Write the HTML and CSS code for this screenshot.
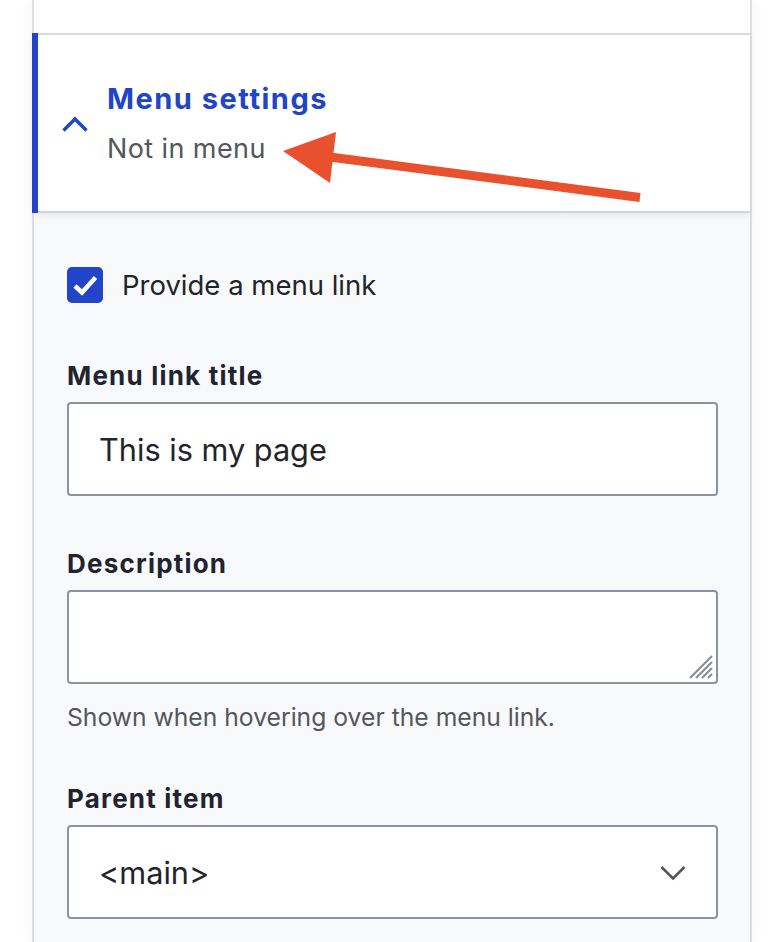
FILE: index.html
```html
<!DOCTYPE html>
<html lang="en">
<head>
<meta charset="utf-8">
<title>Menu settings</title>
<link rel="stylesheet" href="styles.css">
</head>
<body>
<div class="page">
  <div class="card">
    <div class="card-top"></div>
    <div class="summary">
      <svg class="chevron-up" width="26" height="16" viewBox="0 0 26 16" aria-hidden="true">
        <polyline points="1.5,14.5 13,3 24.5,14.5" fill="none" stroke="#2346c4" stroke-width="3.4"/>
      </svg>
      <div class="summary-text">
        <div class="summary-title">Menu settings</div>
        <div class="summary-sub">Not in menu</div>
      </div>
    </div>
    <div class="content">
      <label class="check-row">
        <span class="checkbox">
          <svg width="36" height="36" viewBox="0 0 36 36" aria-hidden="true">
            <polyline points="8,19 15,25.5 28.5,10.5" fill="none" stroke="#fff" stroke-width="4.5"/>
          </svg>
        </span>
        <span class="check-label">Provide a menu link</span>
      </label>

      <div class="field field-first">
        <div class="field-label">Menu link title</div>
        <input class="text-input" type="text" value="This is my page">
      </div>

      <div class="field">
        <div class="field-label">Description</div>
        <div class="textarea-wrap">
          <textarea class="text-area"></textarea>
          <svg class="grip" width="26" height="26" viewBox="0 0 26 26" aria-hidden="true">
            <g stroke="#8b8d94" stroke-width="2.2">
              <line x1="2" y1="24" x2="24" y2="2"/>
              <line x1="8" y1="24" x2="24" y2="8"/>
              <line x1="14" y1="24" x2="24" y2="14"/>
              <line x1="20" y1="24" x2="24" y2="20"/>
            </g>
          </svg>
        </div>
        <div class="help">Shown when hovering over the menu link.</div>
      </div>

      <div class="field">
        <div class="field-label">Parent item</div>
        <div class="select-wrap">
          <select class="select">
            <option>&lt;main&gt;</option>
          </select>
          <svg class="chevron-down" width="26" height="16" viewBox="0 0 26 16" aria-hidden="true">
            <polyline points="1.5,2 13,13.5 24.5,2" fill="none" stroke="#55565b" stroke-width="2.6"/>
          </svg>
        </div>
      </div>
    </div>
  </div>

  <svg class="arrow" width="782" height="942" viewBox="0 0 782 942" aria-hidden="true">
    <line x1="326" y1="156.5" x2="640" y2="197.5" stroke="#e9502e" stroke-width="9"/>
    <polygon points="283,151 336,132 330,183" fill="#e9502e"/>
  </svg>
</div>
</body>
</html>
```

FILE: styles.css
```css
* {
  box-sizing: border-box;
}

html, body {
  margin: 0;
  padding: 0;
  background: #ffffff;
}

body {
  font-family: Inter, "Noto Sans", "Liberation Sans", sans-serif;
  color: #232429;
  overflow: hidden;
}

.page {
  position: relative;
  width: 782px;
  height: 942px;
}

.card {
  margin-left: 32px;
  width: 720px;
  height: 942px;
  border-left: 2px solid #dddde3;
  border-right: 2px solid #dddde3;
  background: #f8f9fb;
  box-shadow: 0 0 14px rgba(0, 0, 0, 0.05);
  display: flex;
  flex-direction: column;
}

.card-top {
  height: 33px;
  background: #ffffff;
}

.summary {
  position: relative;
  background: #ffffff;
  border-top: 2px solid #d9d9df;
  border-bottom: 2px solid #d3d3d9;
  box-shadow: 0 3px 6px rgba(0, 0, 0, 0.06);
  padding: 46px 0 44px 28px;
  display: flex;
  align-items: center;
  gap: 19px;
}

.summary::before {
  content: "";
  position: absolute;
  left: -2px;
  top: -2px;
  bottom: -2px;
  width: 6px;
  background: #2244c8;
}

.chevron-up {
  flex: none;
  display: block;
}

.summary-text {
  display: flex;
  flex-direction: column;
  gap: 14px;
}

.summary-title {
  font-size: 29px;
  line-height: 36px;
  font-weight: 700;
  letter-spacing: 1.5px;
  color: #2244c8;
}

.summary-sub {
  font-size: 27px;
  line-height: 36px;
  letter-spacing: 0.4px;
  color: #55565b;
}

.content {
  padding: 54px 32px 0 33px;
  display: flex;
  flex-direction: column;
}

.check-row {
  display: flex;
  align-items: center;
  gap: 19px;
}

.checkbox {
  width: 36px;
  height: 36px;
  border-radius: 5px;
  background: #2244c8;
  display: flex;
  align-items: center;
  justify-content: center;
}

.checkbox svg {
  display: block;
}

.check-label {
  font-size: 27.5px;
  line-height: 36px;
  color: #232429;
}

.field {
  margin-top: 52px;
  display: flex;
  flex-direction: column;
}

.field-first {
  margin-top: 57px;
}

.field-label {
  font-size: 26px;
  line-height: 32px;
  font-weight: 700;
  letter-spacing: 1.2px;
  color: #222330;
  margin-bottom: 10px;
}

.text-input,
.text-area,
.select {
  display: block;
  width: 100%;
  height: 94px;
  margin: 0;
  border: 2px solid #8e929c;
  border-radius: 4px;
  background: #ffffff;
  font-family: Inter, "Noto Sans", "Liberation Sans", sans-serif;
  font-size: 30.7px;
  color: #232429;
  padding: 0 30px;
  outline: none;
  -webkit-appearance: none;
  appearance: none;
}

.text-area {
  resize: none;
}

.textarea-wrap,
.select-wrap {
  position: relative;
}

.grip {
  position: absolute;
  right: 4px;
  bottom: 4px;
  display: block;
}

.help {
  margin-top: 19px;
  font-size: 24.7px;
  line-height: 28px;
  color: #55565b;
}

.chevron-down {
  position: absolute;
  right: 32px;
  top: 40px;
  display: block;
  pointer-events: none;
}

.arrow {
  position: absolute;
  left: 0;
  top: 0;
  pointer-events: none;
}
```
